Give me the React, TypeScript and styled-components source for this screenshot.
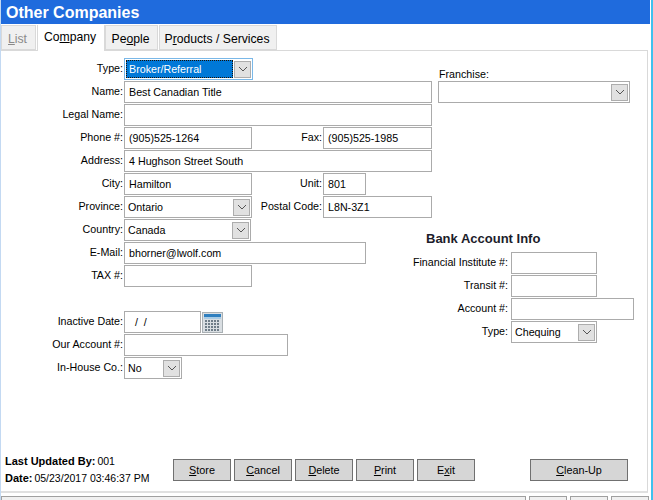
import React from 'react';
import styled, { createGlobalStyle } from 'styled-components';

const GlobalStyle = createGlobalStyle`
  html, body {
    margin: 0;
    padding: 0;
    background: #fff;
  }
  body {
    font-family: "Liberation Sans", Arial, sans-serif;
    font-size: 10.7px;
    color: #000;
  }
  u {
    text-underline-offset: 1px;
  }
`;

const Window = styled.div`
  width: 653px;
  height: 500px;
  overflow: hidden;
  display: flex;
  flex-direction: column;
  background: #fff;
  border-left: 1px solid #c3d9f2;
  border-right: 2px solid #3fc1ee;
  box-sizing: border-box;
`;

const TitleBar = styled.div`
  height: 24px;
  flex: none;
  margin-left: -1px;
  margin-right: 1px;
  padding: 1px 0 0 6px;
  box-sizing: border-box;
  background: #1f6bdd;
  color: #fff;
  font-size: 16px;
  font-weight: bold;
  line-height: 23px;
`;

const TabStrip = styled.div`
  height: 26px;
  flex: none;
  display: flex;
  align-items: flex-end;
  position: relative;
  z-index: 1;
`;

const Tab = styled.div<{ $active?: boolean; $disabled?: boolean; $width: number }>`
  width: ${({ $width }) => $width}px;
  height: ${({ $active }) => ($active ? 26 : 25)}px;
  box-sizing: border-box;
  margin-right: ${({ $active }) => ($active ? 0 : 1)}px;
  margin-bottom: ${({ $active }) => ($active ? -1 : 0)}px;
  display: flex;
  align-items: center;
  justify-content: center;
  font-size: 12.2px;
  padding-top: ${({ $active }) => ($active ? 0 : 2)}px;
  padding-right: 2px;
  padding-bottom: ${({ $active }) => ($active ? 3 : 0)}px;
  background: ${({ $active }) => ($active ? '#fff' : '#f0f0f0')};
  color: ${({ $disabled }) => ($disabled ? '#8a8a8a' : '#000')};
  border: 1px solid #d9d9d9;
  border-bottom: ${({ $active }) => ($active ? 'none' : '1px solid #d9d9d9')};
  border-top: ${({ $active }) => ($active ? 'none' : '1px solid #d9d9d9')};
`;

const Panel = styled.div`
  flex: 1;
  min-height: 0;
  margin-right: 3px;
  margin-bottom: 3px;
  padding-top: 7px;
  border-top: 1px solid #d9d9d9;
  border-right: 1px solid #d9d9d9;
  border-bottom: 2px solid #e0e0e0;
  display: flex;
  flex-direction: column;
`;

const FormArea = styled.div`
  flex: 1;
  display: flex;
`;

const LeftColumn = styled.div`
  width: 437px;
  flex: none;
  display: flex;
  flex-direction: column;
  gap: 1px;
`;

const RightColumn = styled.div`
  flex: 1;
  display: flex;
  flex-direction: column;
`;

const Row = styled.div<{ $gapAbove?: number }>`
  height: 22px;
  display: flex;
  align-items: center;
  margin-top: ${({ $gapAbove }) => $gapAbove ?? 0}px;
`;

const Label = styled.label`
  width: 122px;
  flex: none;
  text-align: right;
  padding-right: 1px;
  box-sizing: content-box;
  font-size: 10.7px;
  white-space: nowrap;
  position: relative;
  top: -1px;
`;

const SideLabel = styled(Label)`
  width: 70px;
`;

const BankLabel = styled(Label)`
  width: 120px;
  padding-right: 3px;
`;

const Field = styled.div<{ $width: number }>`
  width: ${({ $width }) => $width}px;
  height: 22px;
  flex: none;
  box-sizing: border-box;
  border: 1px solid #ababab;
  padding: 1px 0 0 4px;
  display: flex;
  align-items: center;
  font-size: 10.7px;
  line-height: 19px;
  background: #fff;
`;

const SelectBox = styled(Field)`
  justify-content: space-between;
  padding: 0 1px 0 3px;
`;

const ChevronButton = styled.span`
  width: 17px;
  height: 17px;
  flex: none;
  box-sizing: border-box;
  border: 1px solid #adadad;
  background: #e1e1e1;
  display: flex;
  align-items: center;
  justify-content: center;
`;

const FocusedSelect = styled.div`
  width: 129px;
  height: 22px;
  flex: none;
  box-sizing: border-box;
  border: 1px solid #7ab8e8;
  padding: 1px;
  display: flex;
  align-items: center;
  gap: 1px;
`;

const Highlight = styled.span`
  flex: 1;
  height: 18px;
  box-sizing: border-box;
  background: #0078d7;
  color: #fff;
  border: 1px dotted #1a1208;
  padding-left: 2px;
  line-height: 16px;
  font-size: 10.7px;
`;

const CalendarButton = styled.span`
  width: 21px;
  height: 21px;
  margin-left: 1px;
  flex: none;
  display: flex;
`;

const FranchiseLabel = styled.div`
  height: 15px;
  margin-top: 8px;
  padding: 2px 0 0 1px;
  box-sizing: border-box;
  font-size: 10.7px;
  line-height: 13px;
`;

const FranchiseRow = styled.div`
  display: flex;
  margin-bottom: 128px;
`;

const BankTitle = styled.div`
  height: 21px;
  margin-left: -12px;
  font-size: 13px;
  font-weight: bold;
  line-height: 15px;
  color: #1c1c2a;
`;

const BankRows = styled.div`
  margin-left: -50px;
  display: flex;
  flex-direction: column;
  gap: 1px;
`;

const Footer = styled.div`
  height: 22px;
  flex: none;
  margin-bottom: 10px;
  display: flex;
  align-items: flex-start;
`;

const UpdatedInfo = styled.div`
  width: 172px;
  flex: none;
  padding-left: 4px;
  box-sizing: border-box;
  font-size: 10.5px;
  line-height: 17px;
  margin-top: -6px;
`;

const UpdatedKey = styled.b`
  font-size: 11px;
  margin-right: -1px;
`;

const ButtonGroup = styled.div`
  display: flex;
  gap: 3px;
`;

const Button = styled.button<{ $width?: number }>`
  width: ${({ $width }) => $width ?? 58}px;
  height: 22px;
  padding: 0;
  border: 1px solid #707070;
  background: #d6d6d6;
  color: #000;
  font-family: inherit;
  font-size: 10.8px;
`;

const CleanUpButton = styled(Button)`
  margin-left: 55px;
`;

const StatusBar = styled.div`
  height: 4px;
  flex: none;
  display: flex;
  gap: 3px;
  margin-right: 3px;
`;

const StatusCell = styled.div<{ $width: number }>`
  width: ${({ $width }) => $width}px;
  flex: none;
  box-sizing: border-box;
  border-top: 1px solid #a0a0a0;
  border-left: 1px solid #a0a0a0;
  border-right: 1px solid #a0a0a0;
  background: #f0f0f0;
`;

const Chevron = () => (
  <ChevronButton>
    <svg width="10" height="6" viewBox="0 0 10 6" fill="none">
      <path d="M1 1l4 4 4-4" stroke="#555" strokeWidth="1" />
    </svg>
  </ChevronButton>
);

const Select = ({ value, width }: { value?: string; width: number }) => (
  <SelectBox $width={width}>
    <span>{value}</span>
    <Chevron />
  </SelectBox>
);

const CalendarIcon = () => (
  <svg width="21" height="21" viewBox="0 0 21 21">
    <rect x="0.5" y="0.5" width="20" height="20" fill="#d9dee2" stroke="#a9b0b4" />
    <rect x="2" y="2" width="17" height="3" fill="#2f7fbf" />
    <rect x="2" y="5" width="17" height="2" fill="#a9cbe4" />
    {[8, 11, 14, 17].map((y) =>
      [3, 6, 9, 12, 15].map((x) => (
        <rect key={`${x}-${y}`} x={x} y={y} width="2" height="2" fill="#6f7d88" />
      )),
    )}
  </svg>
);

export default function App() {
  return (
    <Window>
      <GlobalStyle />
      <TitleBar>Other Companies</TitleBar>
      <TabStrip>
        <Tab $disabled $width={35}>
          <span>
            <u>L</u>ist
          </span>
        </Tab>
        <Tab $active $width={68}>
          <span>
            Co<u>m</u>pany
          </span>
        </Tab>
        <Tab $width={53}>
          <span>
            Pe<u>o</u>ple
          </span>
        </Tab>
        <Tab $width={118}>
          <span>
            P<u>r</u>oducts / Services
          </span>
        </Tab>
      </TabStrip>
      <Panel>
        <FormArea>
          <LeftColumn>
            <Row>
              <Label>Type:</Label>
              <FocusedSelect>
                <Highlight>Broker/Referral</Highlight>
                <Chevron />
              </FocusedSelect>
            </Row>
            <Row>
              <Label>Name:</Label>
              <Field $width={308}>Best Canadian Title</Field>
            </Row>
            <Row>
              <Label>Legal Name:</Label>
              <Field $width={308} />
            </Row>
            <Row>
              <Label>Phone #:</Label>
              <Field $width={128}>(905)525-1264</Field>
              <SideLabel>Fax:</SideLabel>
              <Field $width={109}>(905)525-1985</Field>
            </Row>
            <Row>
              <Label>Address:</Label>
              <Field $width={308}>4 Hughson Street South</Field>
            </Row>
            <Row>
              <Label>City:</Label>
              <Field $width={128}>Hamilton</Field>
              <SideLabel>Unit:</SideLabel>
              <Field $width={43}>801</Field>
            </Row>
            <Row>
              <Label>Province:</Label>
              <Select value="Ontario" width={128} />
              <SideLabel>Postal Code:</SideLabel>
              <Field $width={109}>L8N-3Z1</Field>
            </Row>
            <Row>
              <Label>Country:</Label>
              <Select value="Canada" width={127} />
            </Row>
            <Row>
              <Label>E-Mail:</Label>
              <Field $width={242}>bhorner@lwolf.com</Field>
            </Row>
            <Row>
              <Label>TAX #:</Label>
              <Field $width={128} />
            </Row>
            <Row $gapAbove={23}>
              <Label>Inactive Date:</Label>
              <Field $width={77}>&nbsp;&nbsp;/&nbsp;&nbsp;/</Field>
              <CalendarButton>
                <CalendarIcon />
              </CalendarButton>
            </Row>
            <Row>
              <Label>Our Account #:</Label>
              <Field $width={164} />
            </Row>
            <Row>
              <Label>In-House Co.:</Label>
              <Select value="No" width={58} />
            </Row>
          </LeftColumn>
          <RightColumn>
            <FranchiseLabel>Franchise:</FranchiseLabel>
            <FranchiseRow>
              <Select width={192} />
            </FranchiseRow>
            <BankTitle>Bank Account Info</BankTitle>
            <BankRows>
              <Row>
                <BankLabel>Financial Institute #:</BankLabel>
                <Field $width={86} />
              </Row>
              <Row>
                <BankLabel>Transit #:</BankLabel>
                <Field $width={86} />
              </Row>
              <Row>
                <BankLabel>Account #:</BankLabel>
                <Field $width={123} />
              </Row>
              <Row>
                <BankLabel>Type:</BankLabel>
                <Select value="Chequing" width={86} />
              </Row>
            </BankRows>
          </RightColumn>
        </FormArea>
        <Footer>
          <UpdatedInfo>
            <div>
              <UpdatedKey>Last Updated By:</UpdatedKey> 001
            </div>
            <div>
              <UpdatedKey>Date:</UpdatedKey> 05/23/2017 03:46:37 PM
            </div>
          </UpdatedInfo>
          <ButtonGroup>
            <Button>
              <u>S</u>tore
            </Button>
            <Button>
              <u>C</u>ancel
            </Button>
            <Button>
              <u>D</u>elete
            </Button>
            <Button>
              <u>P</u>rint
            </Button>
            <Button>
              E<u>x</u>it
            </Button>
          </ButtonGroup>
          <CleanUpButton $width={98}>
            <u>C</u>lean-Up
          </CleanUpButton>
        </Footer>
      </Panel>
      <StatusBar>
        <StatusCell $width={525} />
        <StatusCell $width={38} />
        <StatusCell $width={38} />
        <StatusCell $width={38} />
      </StatusBar>
    </Window>
  );
}
